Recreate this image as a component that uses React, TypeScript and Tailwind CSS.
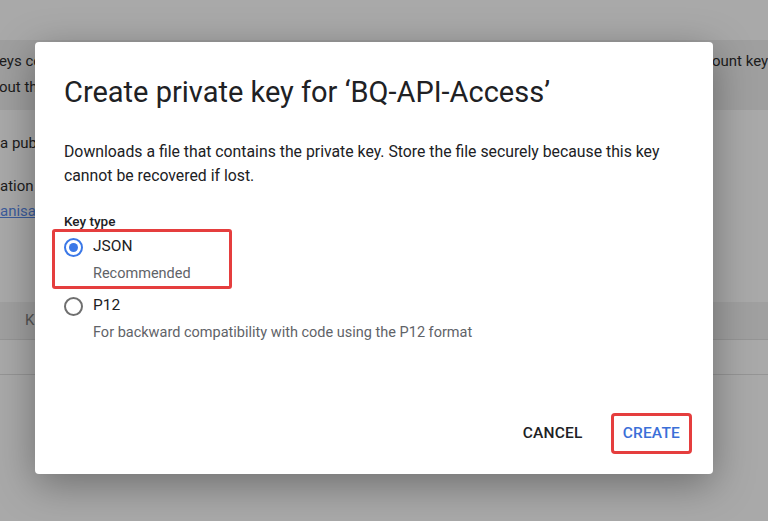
import React from "react";

export default function App() {
  return (
    <div className="relative w-[768px] h-[521px] overflow-hidden bg-[#a9a9a9] font-['Roboto',sans-serif] text-[15px] text-[#1c1c1c]">
      {/* background page */}
      <div className="h-[40px]" />
      <div className="h-[70px] bg-[#9f9f9f] flex flex-col pt-[8px] leading-[26px]">
        <div className="flex justify-between">
          <span className="-ml-[1px]">eys co</span>
          <span className="w-[56px] whitespace-nowrap overflow-hidden">ount key</span>
        </div>
        <div className="-ml-[1px]">out th</div>
      </div>
      <div className="h-[192px] pt-[20px] leading-[26px]">
        <div>a pub</div>
        <div className="mt-[17px]">ation</div>
        <div className="text-[#3b5c9c] underline -mt-[1px]">anisat</div>
      </div>
      <div className="h-[38px] bg-[#a0a0a0] border-b border-[#959595] flex items-center pl-[25px] text-[#555]">K</div>
      <div className="h-[35px] border-b border-[#959595]" />

      {/* dialog */}
      <div className="absolute left-[35px] top-[42px] w-[678px] h-[432px] bg-white rounded-[4px] shadow-[0_10px_40px_rgba(0,0,0,0.35)] flex flex-col px-[29px] pt-[32px]">
        <h1 className="text-[29px] leading-[36px] text-[#202124] font-normal whitespace-nowrap">
          Create private key for ‘BQ-API-Access’
        </h1>
        <p className="mt-[30px] text-[15.8px] leading-[24px] text-[#202124]">
          Downloads a file that contains the private key. Store the file securely because this key cannot be recovered if lost.
        </p>
        <div className="mt-[23px] text-[13.5px] leading-[20px] font-medium text-[#202124]">Key type</div>
        <div className="relative">
          <div className="absolute -left-[12px] top-[-2px] w-[180px] h-[60px] border-[3px] border-[#e53e3e] rounded-[3px]" />
          <div className="flex items-center h-[32px]">
            <span className="w-[19px] h-[19px] rounded-full border-2 border-[#3b78e7] flex items-center justify-center">
              <span className="w-[9px] h-[9px] rounded-full bg-[#3b78e7]" />
            </span>
            <span className="ml-[10px] text-[15.5px] text-[#202124]">JSON</span>
          </div>
          <div className="pl-[29px] text-[14.5px] leading-[22px] text-[#5f6368]">Recommended</div>
          <div className="flex items-center h-[32px] mt-[5px]">
            <span className="w-[19px] h-[19px] rounded-full border-2 border-[#6f6f6f]" />
            <span className="ml-[10px] text-[15.5px] text-[#202124]">P12</span>
          </div>
          <div className="pl-[29px] text-[14.5px] leading-[22px] text-[#5f6368]">
            For backward compatibility with code using the P12 format
          </div>
        </div>
        <div className="mt-auto mb-[20px] flex justify-end items-center gap-[20px] -mr-[8px]">
          <button className="px-[8px] h-[36px] text-[15.5px] font-medium text-[#202124] tracking-[0.2px]">CANCEL</button>
          <button className="relative px-[9px] h-[41px] text-[15.5px] font-medium text-[#3b6fd8] tracking-[0.2px] border-[3px] border-[#e53e3e] rounded-[4px]">CREATE</button>
        </div>
      </div>
    </div>
  );
}
